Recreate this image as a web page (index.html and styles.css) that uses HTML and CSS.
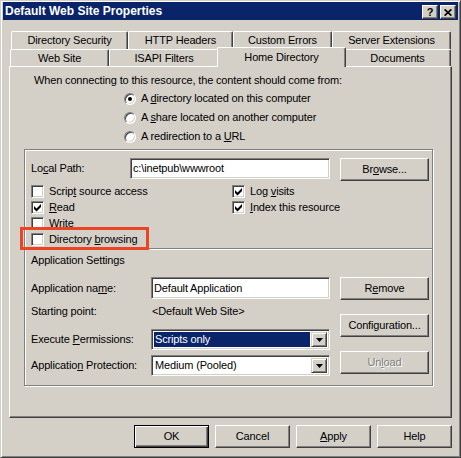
FILE: index.html
```html
<!DOCTYPE html>
<html>
<head>
<meta charset="utf-8">
<title>Default Web Site Properties</title>
<link rel="stylesheet" href="styles.css">
</head>
<body>
<div class="window">
  <div class="titlebar">
    <span class="title">Default Web Site Properties</span>
    <div class="tbtns">
      <div class="tbtn help">?</div>
      <div class="tbtn close">
        <svg width="8" height="7" viewBox="0 0 8 7"><path d="M0.6 0.4 L7.4 6.6 M7.4 0.4 L0.6 6.6" stroke="#000" stroke-width="1.7" fill="none"/></svg>
      </div>
    </div>
  </div>

  <div class="tabs">
    <div class="tabrow r1">
      <div class="tab t-ds">Directory Security</div>
      <div class="tab t-http">HTTP Headers</div>
      <div class="tab t-ce">Custom Errors</div>
      <div class="tab t-se">Server Extensions</div>
    </div>
    <div class="tabrow r2">
      <div class="tab t-ws">Web Site</div>
      <div class="tab t-isapi">ISAPI Filters</div>
      <div class="tab t-hd sel">Home Directory</div>
      <div class="tab t-doc">Documents</div>
    </div>
  </div>

  <div class="panel">
    <p class="intro">When connecting to this resource, the content should come from:</p>
    <div class="radios">
      <div class="rrow"><span class="radio on"></span><span>A <u>d</u>irectory located on this computer</span></div>
      <div class="rrow"><span class="radio"></span><span>A <u>s</u>hare located on another computer</span></div>
      <div class="rrow"><span class="radio"></span><span>A redirection to a <u>U</u>RL</span></div>
    </div>

    <div class="group">
      <div class="pathrow">
        <span class="plabel">Lo<u>c</u>al Path:</span>
        <div class="field path">c:\inetpub\wwwroot</div>
        <div class="btn browse">Br<u>o</u>wse...</div>
      </div>

      <div class="checks">
        <div class="ccol c1">
          <div class="ck"><span class="cb"></span><span>Scrip<u>t</u> source access</span></div>
          <div class="ck"><span class="cb"><svg width="11" height="11" viewBox="1 1 11 11"><path d="M3 5 L5.5 7.5 L10 3 L10 6 L5.5 10.5 L3 8 Z" fill="#000"/></svg></span><span><u>R</u>ead</span></div>
          <div class="ck"><span class="cb"></span><span><u>W</u>rite</span></div>
          <div class="ck"><span class="cb"></span><span>Directory <u>b</u>rowsing</span></div>
        </div>
        <div class="ccol">
          <div class="ck"><span class="cb"><svg width="11" height="11" viewBox="1 1 11 11"><path d="M3 5 L5.5 7.5 L10 3 L10 6 L5.5 10.5 L3 8 Z" fill="#000"/></svg></span><span>Log <u>v</u>isits</span></div>
          <div class="ck"><span class="cb"><svg width="11" height="11" viewBox="1 1 11 11"><path d="M3 5 L5.5 7.5 L10 3 L10 6 L5.5 10.5 L3 8 Z" fill="#000"/></svg></span><span><u>I</u>ndex this resource</span></div>
        </div>
      </div>

      <div class="sep"></div>
      <div class="sect">Application Settings</div>

      <div class="app">
        <div class="appfields">
          <div class="arow ra">
            <span class="alabel">Application na<u>m</u>e:</span>
            <div class="field afield">Default Application</div>
          </div>
          <div class="arow rb">
            <span class="alabel">Starting point:</span>
            <span class="aval">&lt;Default Web Site&gt;</span>
          </div>
          <div class="arow rc">
            <span class="alabel">Execute <u>P</u>ermissions:</span>
            <div class="field combo">
              <span class="cval hl">Scripts only</span>
              <span class="ddbtn"><svg width="7" height="4" viewBox="0 0 7 4"><path d="M0 0 H7 L3.5 4 Z" fill="#000"/></svg></span>
            </div>
          </div>
          <div class="arow rd">
            <span class="alabel">Applicatio<u>n</u> Protection:</span>
            <div class="field combo">
              <span class="cval">Medium (Pooled)</span>
              <span class="ddbtn"><svg width="7" height="4" viewBox="0 0 7 4"><path d="M0 0 H7 L3.5 4 Z" fill="#000"/></svg></span>
            </div>
          </div>
        </div>
        <div class="appbtns">
          <div class="btn">R<u>e</u>move</div>
          <div class="btn">Configuration...</div>
          <div class="btn disabled">Un<u>l</u>oad</div>
        </div>
      </div>
    </div>
  </div>

  <div class="footer">
    <div class="btn def">OK</div>
    <div class="btn">Cancel</div>
    <div class="btn"><u>A</u>pply</div>
    <div class="btn">Help</div>
  </div>

  <div class="highlight"></div>
</div>
</body>
</html>
```

FILE: styles.css
```css
* { box-sizing: border-box; }
html, body { margin: 0; padding: 0; }
body {
  font-family: "Liberation Sans", Arial, sans-serif;
  font-size: 11px;
  line-height: 13px;
  letter-spacing: -0.15px;
  color: #000;
  background: #d4d0c8;
}
u { text-decoration: underline; text-underline-offset: 1px; }

.window {
  position: relative;
  width: 461px;
  height: 458px;
  overflow: hidden;
  background: #d4d0c8;
  border: 1px solid;
  border-color: #d4d0c8 #404040 #404040 #d4d0c8;
  box-shadow: inset 1px 1px #fff, inset -1px -1px #808080;
  padding: 1px 2px 2px 2px;
}

/* title bar */
.titlebar {
  height: 18px;
  background: #0a246a;
  display: flex;
  align-items: center;
  justify-content: space-between;
  padding: 0 2px 0 2px;
}
.title {
  color: #fff;
  font-weight: bold;
  font-size: 12px;
  letter-spacing: 0;
  line-height: 18px;
}
.tbtns { display: flex; gap: 2px; margin-top: 2px; }
.tbtn {
  width: 16px;
  height: 14px;
  background: #d4d0c8;
  border: 1px solid;
  border-color: #fff #404040 #404040 #fff;
  box-shadow: inset -1px -1px #808080;
  display: flex;
  align-items: center;
  justify-content: center;
}
.tbtn svg { display: block; }
.help { font-weight: bold; font-size: 11px; line-height: 12px; letter-spacing: 0; }

/* tabs */
.tabs { margin: 11px 0 0 6px; width: 443px; }
.tabrow { display: flex; }
.r1 { height: 18px; padding-left: 2px; }
.r2 { height: 17px; padding-left: 1px; }
.tab {
  height: 100%;
  flex: none;
  background: #d4d0c8;
  border-top: 1px solid #fff;
  border-left: 1px solid #fff;
  border-right: 1px solid #404040;
  box-shadow: inset -1px 0 #808080;
  border-radius: 2px 2px 0 0;
  display: flex;
  align-items: center;
  justify-content: center;
  white-space: nowrap;
}
.t-ds { width: 117px; }
.t-http { width: 105px; }
.t-ce { width: 99px; }
.t-se { width: 119px; }
.t-ws { width: 99px; }
.t-isapi { width: 110px; }
.t-doc { width: 107px; }
.tab.sel {
  width: 129px;
  height: 20px;
  margin: -2px -2px 0 -2px;
  position: relative;
  z-index: 2;
  padding-bottom: 1px;
}

/* panel */
.panel {
  margin-left: 6px;
  width: 443px;
  height: 352px;
  border: 1px solid;
  border-color: #fff #404040 #404040 #fff;
  box-shadow: inset -1px -1px #808080;
  overflow: hidden;
}
.intro { margin: 7px 0 0 24px; white-space: nowrap; }
.radios { margin: 2px 0 0 114px; }
.rrow { display: flex; align-items: center; height: 19px; gap: 5px; }
.radio {
  position: relative;
  flex: none;
  width: 12px;
  height: 12px;
  border-radius: 50%;
  background: #fff;
  border: 1px solid;
  border-color: #808080 #fff #fff #808080;
  box-shadow: inset 1px 1px #404040, inset -1px -1px #d4d0c8;
}
.radio.on::after {
  content: "";
  position: absolute;
  left: 3px;
  top: 3px;
  width: 4px;
  height: 4px;
  border-radius: 50%;
  background: #000;
}

/* group box */
.group {
  margin: 3px 0 0 14px;
  width: 409px;
  height: 237px;
  border: 1px solid #808080;
  box-shadow: inset 1px 1px #fff, 1px 1px #fff;
}
.pathrow {
  display: flex;
  align-items: flex-start;
  margin-top: 8px;
  padding-left: 6px;
}
.plabel { width: 99px; line-height: 21px; flex: none; }
.field {
  flex: none;
  background: #fff;
  border: 1px solid;
  border-color: #808080 #fff #fff #808080;
  box-shadow: inset 1px 1px #404040, inset -1px -1px #d4d0c8;
  padding-left: 2px;
  display: flex;
  align-items: center;
  white-space: nowrap;
  overflow: hidden;
}
.path { width: 200px; height: 21px; }
.btn {
  flex: none;
  height: 23px;
  background: #d4d0c8;
  border: 1px solid;
  border-color: #fff #404040 #404040 #fff;
  box-shadow: inset -1px -1px #808080;
  display: flex;
  align-items: center;
  justify-content: center;
  white-space: nowrap;
}
.browse { width: 89px; margin-left: 10px; }
.btn.def {
  border-color: #000;
  box-shadow: inset 1px 1px #fff, inset -1px -1px #404040, inset -2px -2px #808080;
}
.btn.disabled { color: #808080; text-shadow: 1px 1px #fff; }

.checks { display: flex; margin-top: 2px; padding-left: 6px; }
.ccol { display: flex; flex-direction: column; }
.c1 { width: 201px; }
.ck { display: flex; align-items: center; gap: 5px; height: 16px; }
.cb {
  flex: none;
  width: 13px;
  height: 13px;
  background: #fff;
  border: 1px solid;
  border-color: #808080 #fff #fff #808080;
  box-shadow: inset 1px 1px #404040, inset -1px -1px #d4d0c8;
}
.cb svg { display: block; }

.sep {
  margin-top: 1px;
  height: 2px;
  border-top: 1px solid #808080;
  border-bottom: 1px solid #fff;
}
.sect { margin-top: 4px; padding-left: 6px; }

.app { display: flex; margin-top: 10px; padding-left: 6px; }
.appfields { width: 299px; flex: none; }
.arow { display: flex; align-items: center; height: 21px; }
.ra { height: 22px; }
.rb { margin-top: 2px; }
.rc { margin-top: 7px; }
.rd { margin-top: 5px; }
.alabel { width: 120px; flex: none; white-space: nowrap; }
.aval { padding-left: 1px; }
.afield { width: 179px; height: 22px; }
.combo { width: 179px; height: 21px; padding: 2px; }
.cval {
  flex: 1;
  height: 100%;
  display: flex;
  align-items: center;
  padding-left: 1px;
}
.cval.hl { background: #0a246a; color: #fff; margin-right: 1px; }
.ddbtn {
  flex: none;
  width: 16px;
  height: 100%;
  background: #d4d0c8;
  border: 1px solid;
  border-color: #d4d0c8 #404040 #404040 #d4d0c8;
  box-shadow: inset 1px 1px #fff, inset -1px -1px #808080;
  display: flex;
  align-items: center;
  justify-content: center;
}
.ddbtn svg { display: block; }
.appbtns { display: flex; flex-direction: column; gap: 14px; margin-left: 10px; }
.appbtns .btn { width: 89px; }

/* footer buttons */
.footer {
  display: flex;
  justify-content: flex-end;
  gap: 6px;
  margin: 7px 6px 0 0;
}
.footer .btn { width: 75px; }

/* annotation */
.highlight {
  position: absolute;
  left: 19px;
  top: 226px;
  width: 129px;
  height: 23px;
  border: 3px solid #ea4423;
  pointer-events: none;
}
```
